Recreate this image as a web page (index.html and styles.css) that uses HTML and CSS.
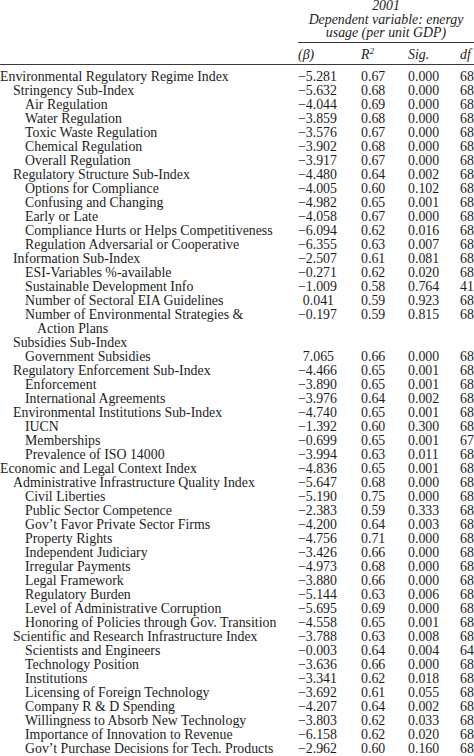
FILE: index.html
```html
<!DOCTYPE html>
<html lang="en">
<head>
<meta charset="utf-8">
<title>Table</title>
<link rel="stylesheet" href="styles.css">
</head>
<body>
<div class="page">
<table class="t">
<colgroup><col class="c-label"><col class="c-b"><col class="c-r"><col class="c-s"><col class="c-d"></colgroup>
<thead>
<tr class="h-top"><th></th><th colspan="4" class="span">2001<br>Dependent variable: energy<br>usage (per unit GDP)</th></tr>
<tr class="h-cols"><th></th><th>(<i>β</i>)</th><th>R<sup>2</sup></th><th>Sig.</th><th>df</th></tr>
</thead>
<tbody>
<tr><td class="l0">Environmental Regulatory Regime Index</td><td class="b">−5.281</td><td>0.67</td><td>0.000</td><td>68</td></tr>
<tr><td class="l1">Stringency Sub-Index</td><td class="b">−5.632</td><td>0.68</td><td>0.000</td><td>68</td></tr>
<tr><td class="l2">Air Regulation</td><td class="b">−4.044</td><td>0.69</td><td>0.000</td><td>68</td></tr>
<tr><td class="l2">Water Regulation</td><td class="b">−3.859</td><td>0.68</td><td>0.000</td><td>68</td></tr>
<tr><td class="l2">Toxic Waste Regulation</td><td class="b">−3.576</td><td>0.67</td><td>0.000</td><td>68</td></tr>
<tr><td class="l2">Chemical Regulation</td><td class="b">−3.902</td><td>0.68</td><td>0.000</td><td>68</td></tr>
<tr><td class="l2">Overall Regulation</td><td class="b">−3.917</td><td>0.67</td><td>0.000</td><td>68</td></tr>
<tr><td class="l1">Regulatory Structure Sub-Index</td><td class="b">−4.480</td><td>0.64</td><td>0.002</td><td>68</td></tr>
<tr><td class="l2">Options for Compliance</td><td class="b">−4.005</td><td>0.60</td><td>0.102</td><td>68</td></tr>
<tr><td class="l2">Confusing and Changing</td><td class="b">−4.982</td><td>0.65</td><td>0.001</td><td>68</td></tr>
<tr><td class="l2">Early or Late</td><td class="b">−4.058</td><td>0.67</td><td>0.000</td><td>68</td></tr>
<tr><td class="l2">Compliance Hurts or Helps Competitiveness</td><td class="b">−6.094</td><td>0.62</td><td>0.016</td><td>68</td></tr>
<tr><td class="l2">Regulation Adversarial or Cooperative</td><td class="b">−6.355</td><td>0.63</td><td>0.007</td><td>68</td></tr>
<tr><td class="l1">Information Sub-Index</td><td class="b">−2.507</td><td>0.61</td><td>0.081</td><td>68</td></tr>
<tr><td class="l2">ESI-Variables %-available</td><td class="b">−0.271</td><td>0.62</td><td>0.020</td><td>68</td></tr>
<tr><td class="l2">Sustainable Development Info</td><td class="b">−1.009</td><td>0.58</td><td>0.764</td><td>41</td></tr>
<tr><td class="l2">Number of Sectoral EIA Guidelines</td><td class="b">0.041</td><td>0.59</td><td>0.923</td><td>68</td></tr>
<tr><td class="l2 wrap">Number of Environmental Strategies &amp;<br>Action Plans</td><td class="b">−0.197</td><td>0.59</td><td>0.815</td><td>68</td></tr>
<tr><td class="l1">Subsidies Sub-Index</td><td class="b"></td><td></td><td></td><td></td></tr>
<tr><td class="l2">Government Subsidies</td><td class="b">7.065</td><td>0.66</td><td>0.000</td><td>68</td></tr>
<tr><td class="l1">Regulatory Enforcement Sub-Index</td><td class="b">−4.466</td><td>0.65</td><td>0.001</td><td>68</td></tr>
<tr><td class="l2">Enforcement</td><td class="b">−3.890</td><td>0.65</td><td>0.001</td><td>68</td></tr>
<tr><td class="l2">International Agreements</td><td class="b">−3.976</td><td>0.64</td><td>0.002</td><td>68</td></tr>
<tr><td class="l1">Environmental Institutions Sub-Index</td><td class="b">−4.740</td><td>0.65</td><td>0.001</td><td>68</td></tr>
<tr><td class="l2">IUCN</td><td class="b">−1.392</td><td>0.60</td><td>0.300</td><td>68</td></tr>
<tr><td class="l2">Memberships</td><td class="b">−0.699</td><td>0.65</td><td>0.001</td><td>67</td></tr>
<tr><td class="l2">Prevalence of ISO 14000</td><td class="b">−3.994</td><td>0.63</td><td>0.011</td><td>68</td></tr>
<tr><td class="l0">Economic and Legal Context Index</td><td class="b">−4.836</td><td>0.65</td><td>0.001</td><td>68</td></tr>
<tr><td class="l1">Administrative Infrastructure Quality Index</td><td class="b">−5.647</td><td>0.68</td><td>0.000</td><td>68</td></tr>
<tr><td class="l2">Civil Liberties</td><td class="b">−5.190</td><td>0.75</td><td>0.000</td><td>68</td></tr>
<tr><td class="l2">Public Sector Competence</td><td class="b">−2.383</td><td>0.59</td><td>0.333</td><td>68</td></tr>
<tr><td class="l2">Gov’t Favor Private Sector Firms</td><td class="b">−4.200</td><td>0.64</td><td>0.003</td><td>68</td></tr>
<tr><td class="l2">Property Rights</td><td class="b">−4.756</td><td>0.71</td><td>0.000</td><td>68</td></tr>
<tr><td class="l2">Independent Judiciary</td><td class="b">−3.426</td><td>0.66</td><td>0.000</td><td>68</td></tr>
<tr><td class="l2">Irregular Payments</td><td class="b">−4.973</td><td>0.68</td><td>0.000</td><td>68</td></tr>
<tr><td class="l2">Legal Framework</td><td class="b">−3.880</td><td>0.66</td><td>0.000</td><td>68</td></tr>
<tr><td class="l2">Regulatory Burden</td><td class="b">−5.144</td><td>0.63</td><td>0.006</td><td>68</td></tr>
<tr><td class="l2">Level of Administrative Corruption</td><td class="b">−5.695</td><td>0.69</td><td>0.000</td><td>68</td></tr>
<tr><td class="l2">Honoring of Policies through Gov. Transition</td><td class="b">−4.558</td><td>0.65</td><td>0.001</td><td>68</td></tr>
<tr><td class="l1">Scientific and Research Infrastructure Index</td><td class="b">−3.788</td><td>0.63</td><td>0.008</td><td>68</td></tr>
<tr><td class="l2">Scientists and Engineers</td><td class="b">−0.003</td><td>0.64</td><td>0.004</td><td>64</td></tr>
<tr><td class="l2">Technology Position</td><td class="b">−3.636</td><td>0.66</td><td>0.000</td><td>68</td></tr>
<tr><td class="l2">Institutions</td><td class="b">−3.341</td><td>0.62</td><td>0.018</td><td>68</td></tr>
<tr><td class="l2">Licensing of Foreign Technology</td><td class="b">−3.692</td><td>0.61</td><td>0.055</td><td>68</td></tr>
<tr><td class="l2">Company R &amp; D Spending</td><td class="b">−4.207</td><td>0.64</td><td>0.002</td><td>68</td></tr>
<tr><td class="l2">Willingness to Absorb New Technology</td><td class="b">−3.803</td><td>0.62</td><td>0.033</td><td>68</td></tr>
<tr><td class="l2">Importance of Innovation to Revenue</td><td class="b">−6.158</td><td>0.62</td><td>0.020</td><td>68</td></tr>
<tr><td class="l2">Gov’t Purchase Decisions for Tech. Products</td><td class="b">−2.962</td><td>0.60</td><td>0.160</td><td>68</td></tr>
</tbody>
</table>
</div>
</body>
</html>
```

FILE: styles.css
```css
html, body {
  margin: 0;
  padding: 0;
  background: #ffffff;
}
.page {
  width: 474px;
  height: 756px;
  overflow: hidden;
  font-family: "Liberation Serif", "Times New Roman", serif;
  font-size: 13.85px;
  color: #1c1c1c;
}
.t {
  border-collapse: collapse;
  border-spacing: 0;
  table-layout: fixed;
  width: 480px;
  margin-top: -1px;
}
.c-label { width: 298px; }
.c-b { width: 63px; }
.c-r { width: 47px; }
.c-s { width: 52px; }
.c-d { width: 20px; }
.t th, .t td {
  padding: 0;
  font-weight: normal;
  text-align: left;
  white-space: nowrap;
  vertical-align: top;
  line-height: 13.98px;
}
.h-top .span {
  font-style: italic;
  text-align: center;
  line-height: 13.5px;
  padding-bottom: 2px;
  border-bottom: 1px solid #3a3a3a;
  padding-right: 6px;
}
.h-cols th {
  font-style: italic;
  padding-top: 5px;
  padding-bottom: 3px;
  border-bottom: 1.5px solid #3a3a3a;
}
.h-cols sup {
  font-size: 9px;
  line-height: 0;
  vertical-align: 5px;
}
.t tbody tr:first-child td { padding-top: 5px; }
.t td.b {
  text-align: right;
  padding-right: 27px;
}
.l0 { padding-left: 0; }
.t td.l1 { padding-left: 13px; }
.t td.l2 { padding-left: 25px; }
.t td.wrap {
  padding-left: 37px;
  text-indent: -12px;
}
```
